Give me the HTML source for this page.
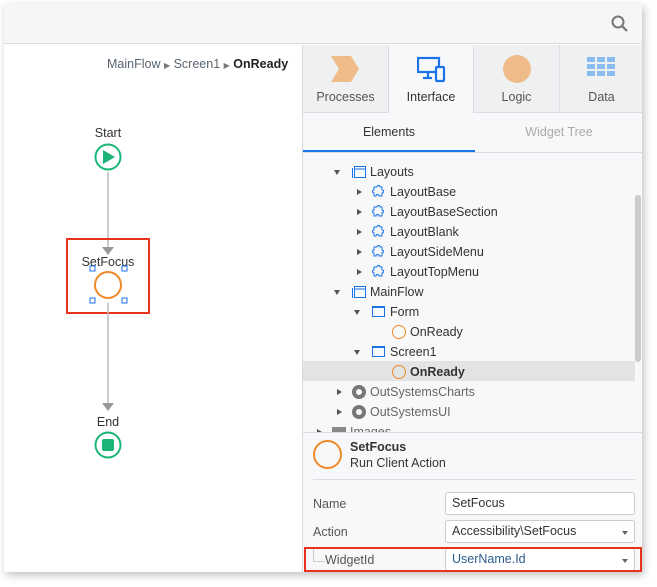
<!DOCTYPE html><html><head><style>
*{box-sizing:border-box;margin:0;padding:0}
body{width:657px;height:587px;background:#fff;font-family:"Liberation Sans",sans-serif;font-size:12px;color:#333;position:relative;overflow:hidden}
.win{position:absolute;left:4px;top:4px;width:638px;height:568px;background:#fff;box-shadow:2px 3px 8px rgba(0,0,0,.25);overflow:hidden}
.abs{position:absolute}
.top{left:0;top:0;width:638px;height:40px;background:#f5f6f8;border-bottom:1px solid #dcdde0}
.rp{left:298px;top:41px;width:340px;height:527px;background:#f7f8fa;border-left:1px solid #d8d9dc}
.tab{position:absolute;top:0;height:68px;background:#eef0f2;border-right:1px solid #dcdde0;border-bottom:1px solid #dcdde0;text-align:center;color:#555;font-size:12.5px}
.tab span{position:absolute;left:0;right:0;top:45px}
.row{position:absolute;left:0;width:332px;height:20px;line-height:20px;font-size:12.5px;color:#333}
.tri{position:absolute;top:7px;width:0;height:0;border-left:5px solid #555;border-top:3.5px solid transparent;border-bottom:3.5px solid transparent}
.trd{position:absolute;top:8px;width:0;height:0;border-top:5px solid #555;border-left:3.5px solid transparent;border-right:3.5px solid transparent}
.inp{position:absolute;left:142px;width:190px;height:23px;background:#fff;border:1px solid #ccc;border-radius:3px;padding-left:6px;line-height:21px;font-size:12.5px;color:#333}
.lbl{position:absolute;left:10px;font-size:12.5px;color:#555}
.dd::after{content:"";position:absolute;right:6px;top:10px;border-top:4px solid #666;border-left:3px solid transparent;border-right:3px solid transparent}
</style></head><body>
<div class="win">
<div class="abs top"><svg class="abs" style="left:606px;top:10px" width="20" height="20"><circle cx="8" cy="8" r="5.5" fill="none" stroke="#777" stroke-width="2"/><line x1="12" y1="12" x2="17" y2="17" stroke="#777" stroke-width="2.2"/></svg></div>
<div class="abs" style="left:103px;top:53px;font-size:12.5px;color:#5a6570">MainFlow <span style="font-size:8px;color:#777">▶</span> Screen1 <span style="font-size:8px;color:#777">▶</span> <b style="color:#222">OnReady</b></div>
<svg class="abs" style="left:0;top:0" width="298" height="568">
<text x="104" y="133" font-size="12.5" text-anchor="middle" fill="#333" font-family="Liberation Sans">Start</text>
<circle cx="104" cy="153" r="12.5" fill="#fff" stroke="#1cb578" stroke-width="2"/><path d="M99 146 L111 153 L99 160Z" fill="#1cb578"/>
<line x1="104" y1="168" x2="104" y2="246" stroke="#bbb" stroke-width="1.5"/><path d="M98 243 L110 243 L104 251Z" fill="#999"/>
<rect x="63" y="235" width="82" height="74" fill="none" stroke="#e8321e" stroke-width="2"/>
<text x="104" y="262" font-size="12.5" text-anchor="middle" fill="#333" font-family="Liberation Sans">SetFocus</text>
<circle cx="104" cy="281" r="13" fill="#fff" stroke="#ef8a2a" stroke-width="2"/>
<g fill="#fff" stroke="#1a73e8"><rect x="86" y="262" width="5" height="5"/><rect x="118" y="262" width="5" height="5"/><rect x="86" y="294" width="5" height="5"/><rect x="118" y="294" width="5" height="5"/></g>
<line x1="104" y1="299" x2="104" y2="402" stroke="#bbb" stroke-width="1.5"/><path d="M98 399 L110 399 L104 407Z" fill="#999"/>
<text x="104" y="422" font-size="12.5" text-anchor="middle" fill="#333" font-family="Liberation Sans">End</text>
<circle cx="104" cy="441" r="12.5" fill="#fff" stroke="#1cb578" stroke-width="2"/><rect x="98" y="435" width="12" height="12" rx="2" fill="#1cb578"/>
</svg>
<div class="abs rp">
<div class="tab" style="left:0;width:86px"><svg class="abs" style="left:28px;top:11px" width="30" height="26"><path d="M0 0 H20 L28 13 L20 26 H0 L8 13Z" fill="#efbb88"/></svg><span>Processes</span></div>
<div class="tab" style="left:86px;width:85px;background:#f7f8fa;border-bottom:none;color:#333"><svg class="abs" style="left:28px;top:11px" width="30" height="30" fill="none" stroke="#1a73e8" stroke-width="2.2"><rect x="1" y="2" width="21" height="14"/><line x1="11" y1="16" x2="11" y2="21"/><line x1="6" y1="22" x2="15" y2="22"/><rect x="19" y="11" width="8" height="14" fill="#f7f8fa" rx="1"/></svg><span>Interface</span></div>
<div class="tab" style="left:171px;width:86px"><div class="abs" style="left:29px;top:10px;width:28px;height:28px;border-radius:50%;background:#efbb88"></div><span>Logic</span></div>
<div class="tab" style="left:257px;width:83px;border-right:none"><svg class="abs" style="left:27px;top:12px" width="30" height="24" fill="#8bbcef"><rect x="0" y="0" width="8" height="5"/><rect x="10" y="0" width="8" height="5"/><rect x="20" y="0" width="8" height="5"/><rect x="0" y="7" width="8" height="5"/><rect x="10" y="7" width="8" height="5"/><rect x="20" y="7" width="8" height="5"/><rect x="0" y="14" width="8" height="5"/><rect x="10" y="14" width="8" height="5"/><rect x="20" y="14" width="8" height="5"/></svg><span>Data</span></div>
<div class="abs" style="left:0;top:68px;width:340px;height:40px;border-bottom:1px solid #dcdde0"><div class="abs" style="left:0;width:172px;top:12px;text-align:center;font-size:12.5px;color:#333">Elements</div><div class="abs" style="left:172px;width:168px;top:12px;text-align:center;font-size:12.5px;color:#aaa">Widget Tree</div><div class="abs" style="left:0;top:37px;width:172px;height:2px;background:#1a73e8"></div></div>
<div class="abs" style="left:332px;top:150px;width:6px;height:167px;background:#ccc;border-radius:3px"></div>
<div class="abs" style="left:0;top:316px;width:332px;height:20px;background:#e2e3e5"></div>
<div class="abs" style="left:0;top:107px;width:340px;height:281px;overflow:hidden">
<svg width="0" height="0" style="position:absolute"><defs><symbol id="fl" viewBox="0 0 14 12"><rect x="2.5" y="0.5" width="11" height="11" fill="none" stroke="#1a73e8"/><line x1="0.5" y1="2" x2="0.5" y2="12" stroke="#1a73e8"/><line x1="2.5" y1="3" x2="13.5" y2="3" stroke="#1a73e8"/></symbol><symbol id="pz" viewBox="0 0 14 14"><path d="M4 2h2a1.5 1.5 0 0 1 3 0h2v3a1.5 1.5 0 0 1 0 3v3h-3a1.5 1.5 0 0 0-3 0H3V8a1.5 1.5 0 0 1 0-3V2z" fill="none" stroke="#1a73e8"/></symbol></defs></svg>
<div class="row" style="top:10px"><i class="trd" style="left:31px"></i><svg class="abs" style="left:49px;top:4px" width="14" height="12"><use href="#fl"/></svg><span class="abs" style="left:67px">Layouts</span></div>
<div class="row" style="top:30px"><i class="tri" style="left:54px"></i><svg class="abs" style="left:68px;top:3px" width="14" height="14"><use href="#pz"/></svg><span class="abs" style="left:87px">LayoutBase</span></div>
<div class="row" style="top:50px"><i class="tri" style="left:54px"></i><svg class="abs" style="left:68px;top:3px" width="14" height="14"><use href="#pz"/></svg><span class="abs" style="left:87px">LayoutBaseSection</span></div>
<div class="row" style="top:70px"><i class="tri" style="left:54px"></i><svg class="abs" style="left:68px;top:3px" width="14" height="14"><use href="#pz"/></svg><span class="abs" style="left:87px">LayoutBlank</span></div>
<div class="row" style="top:90px"><i class="tri" style="left:54px"></i><svg class="abs" style="left:68px;top:3px" width="14" height="14"><use href="#pz"/></svg><span class="abs" style="left:87px">LayoutSideMenu</span></div>
<div class="row" style="top:110px"><i class="tri" style="left:54px"></i><svg class="abs" style="left:68px;top:3px" width="14" height="14"><use href="#pz"/></svg><span class="abs" style="left:87px">LayoutTopMenu</span></div>
<div class="row" style="top:130px"><i class="trd" style="left:31px"></i><svg class="abs" style="left:49px;top:4px" width="14" height="12"><use href="#fl"/></svg><span class="abs" style="left:67px">MainFlow</span></div>
<div class="row" style="top:150px"><i class="trd" style="left:51px"></i><div class="abs" style="left:69px;top:4px;width:13px;height:11px;border:1px solid #1a73e8;border-top-width:2px"></div><span class="abs" style="left:87px">Form</span></div>
<div class="row" style="top:170px"><div class="abs" style="left:89px;top:3px;width:14px;height:14px;border:1.5px solid #ef8a2a;border-radius:50%"></div><span class="abs" style="left:107px">OnReady</span></div>
<div class="row" style="top:190px"><i class="trd" style="left:51px"></i><div class="abs" style="left:69px;top:4px;width:13px;height:11px;border:1px solid #1a73e8;border-top-width:2px"></div><span class="abs" style="left:87px">Screen1</span></div>
<div class="row" style="top:210px"><div class="abs" style="left:89px;top:3px;width:14px;height:14px;border:1.5px solid #ef8a2a;border-radius:50%"></div><b class="abs" style="left:107px">OnReady</b></div>
<div class="row" style="top:230px;color:#666"><i class="tri" style="left:34px"></i><div class="abs" style="left:49px;top:3px;width:14px;height:14px;border:4px solid #777;border-radius:50%"></div><span class="abs" style="left:67px">OutSystemsCharts</span></div>
<div class="row" style="top:250px;color:#666"><i class="tri" style="left:34px"></i><div class="abs" style="left:49px;top:3px;width:14px;height:14px;border:4px solid #777;border-radius:50%"></div><span class="abs" style="left:67px">OutSystemsUI</span></div>
<div class="row" style="top:270px;color:#666"><i class="tri" style="left:14px"></i><div class="abs" style="left:29px;top:5px;width:14px;height:10px;background:#888"></div><span class="abs" style="left:47px">Images</span></div>
</div>
<div class="abs" style="left:0;top:387px;width:340px;height:140px;background:#f7f8fa;border-top:1px solid #dcdde0">
<div class="abs" style="left:10px;top:7px;width:29px;height:29px;border:2px solid #ef8a2a;border-radius:50%"></div>
<b class="abs" style="left:47px;top:7px;font-size:12.5px">SetFocus</b>
<div class="abs" style="left:47px;top:23px;font-size:12.5px">Run Client Action</div>
<div class="abs" style="left:10px;top:46px;width:322px;height:1px;background:#dcdde0"></div>
<div class="lbl" style="top:64px">Name</div><div class="inp" style="top:59px">SetFocus</div>
<div class="lbl" style="top:92px">Action</div><div class="inp dd" style="top:87px">Accessibility\SetFocus</div>
<div class="abs" style="left:10px;top:116px;width:1px;height:12px;background:#ccc"></div><div class="abs" style="left:10px;top:128px;width:12px;height:1px;background:#ccc"></div>
<div class="lbl" style="left:22px;top:120px">WidgetId</div><div class="inp dd" style="top:115px;color:#2a5c8a">UserName.Id</div>
<div class="abs" style="left:1px;top:114px;width:338px;height:25px;border:2px solid #e8321e"></div>
</div>
</div>
</div>
</body></html>
